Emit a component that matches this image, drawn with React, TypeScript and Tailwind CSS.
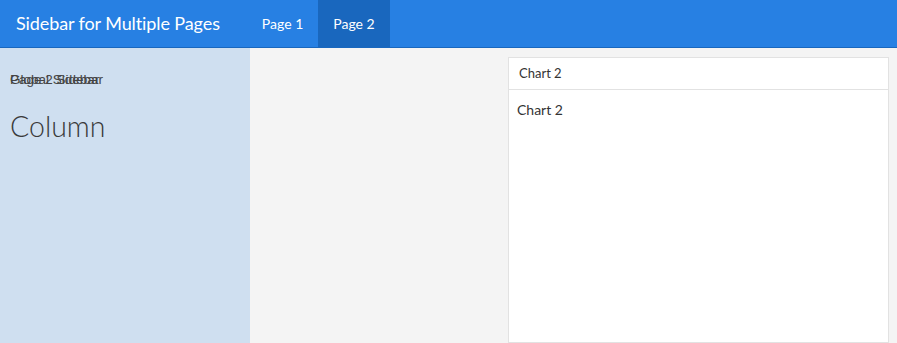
import React from "react";

export default function App() {
    return (
        <div className="flex h-[343px] w-[897px] flex-col overflow-hidden bg-[#f4f4f4] font-['Lato',sans-serif] text-[#333]">
            {/* navbar */}
            <div className="flex h-[48px] shrink-0 items-stretch border-b border-[#1967be] bg-[#2780e3] text-white">
                <div className="flex items-center pl-[16px] pr-[27px] text-[18px] tracking-[-0.1px]">Sidebar for Multiple Pages</div>
                <div className="flex items-center px-[15px] text-[14px]">Page 1</div>
                <div className="flex items-center bg-[#1967be] px-[15px] text-[14px]">Page 2</div>
            </div>

            <div className="flex min-h-0 flex-1">
                {/* sidebar */}
                <div className="w-[250px] shrink-0 bg-[#cfdff0] px-[10px] pt-[24px]">
                    <div className="relative h-[16px] font-['Liberation_Sans',sans-serif] text-[13.5px] leading-[16px] text-[#444]">
                        <span>Page 2 Sidebar</span>
                        <span className="absolute left-0 top-0">Global Sidebar</span>
                    </div>
                    <h3 className="mt-[21px] text-[28.5px] font-light leading-[34px] text-[#3a3a3a]">Column</h3>
                </div>

                {/* main */}
                <div className="flex min-w-0 flex-1 pl-[258px] pr-[8px] pt-[9px]">
                    <div className="flex flex-1 flex-col border border-[#e2e2e2] bg-white">
                        <div className="flex h-[32px] items-center border-b border-[#e2e2e2] px-[10px] text-[13px]">Chart 2</div>
                        <div className="px-[8px] pt-[9px] text-[14px]">Chart 2</div>
                    </div>
                </div>
            </div>
        </div>
    );
}
